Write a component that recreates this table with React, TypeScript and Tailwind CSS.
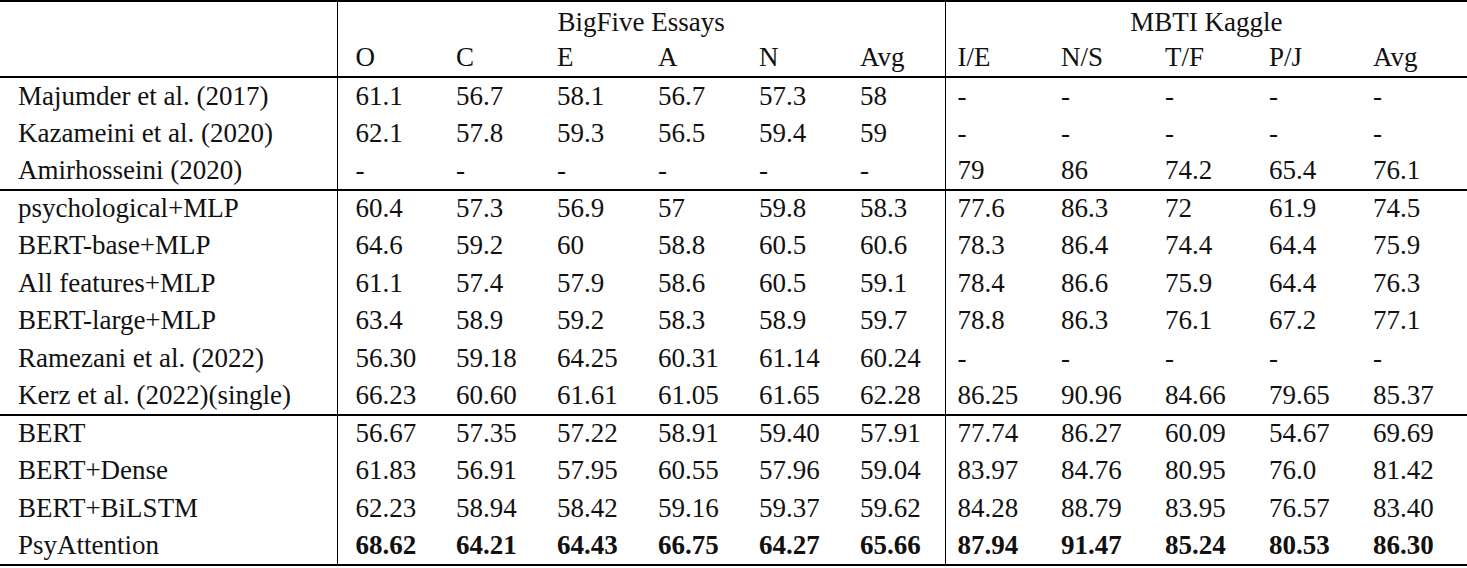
import React from "react";

type Row = { name: string; big: string[]; mbti: string[]; bold?: boolean };

const groups: Row[][] = [
  [
    { name: "Majumder et al. (2017)", big: ["61.1", "56.7", "58.1", "56.7", "57.3", "58"], mbti: ["-", "-", "-", "-", "-"] },
    { name: "Kazameini et al. (2020)", big: ["62.1", "57.8", "59.3", "56.5", "59.4", "59"], mbti: ["-", "-", "-", "-", "-"] },
    { name: "Amirhosseini (2020)", big: ["-", "-", "-", "-", "-", "-"], mbti: ["79", "86", "74.2", "65.4", "76.1"] },
  ],
  [
    { name: "psychological+MLP", big: ["60.4", "57.3", "56.9", "57", "59.8", "58.3"], mbti: ["77.6", "86.3", "72", "61.9", "74.5"] },
    { name: "BERT-base+MLP", big: ["64.6", "59.2", "60", "58.8", "60.5", "60.6"], mbti: ["78.3", "86.4", "74.4", "64.4", "75.9"] },
    { name: "All features+MLP", big: ["61.1", "57.4", "57.9", "58.6", "60.5", "59.1"], mbti: ["78.4", "86.6", "75.9", "64.4", "76.3"] },
    { name: "BERT-large+MLP", big: ["63.4", "58.9", "59.2", "58.3", "58.9", "59.7"], mbti: ["78.8", "86.3", "76.1", "67.2", "77.1"] },
    { name: "Ramezani et al. (2022)", big: ["56.30", "59.18", "64.25", "60.31", "61.14", "60.24"], mbti: ["-", "-", "-", "-", "-"] },
    { name: "Kerz et al. (2022)(single)", big: ["66.23", "60.60", "61.61", "61.05", "61.65", "62.28"], mbti: ["86.25", "90.96", "84.66", "79.65", "85.37"] },
  ],
  [
    { name: "BERT", big: ["56.67", "57.35", "57.22", "58.91", "59.40", "57.91"], mbti: ["77.74", "86.27", "60.09", "54.67", "69.69"] },
    { name: "BERT+Dense", big: ["61.83", "56.91", "57.95", "60.55", "57.96", "59.04"], mbti: ["83.97", "84.76", "80.95", "76.0", "81.42"] },
    { name: "BERT+BiLSTM", big: ["62.23", "58.94", "58.42", "59.16", "59.37", "59.62"], mbti: ["84.28", "88.79", "83.95", "76.57", "83.40"] },
    { name: "PsyAttention", big: ["68.62", "64.21", "64.43", "66.75", "64.27", "65.66"], mbti: ["87.94", "91.47", "85.24", "80.53", "86.30"], bold: true },
  ],
];

const bigCols = ["O", "C", "E", "A", "N", "Avg"];
const mbtiCols = ["I/E", "N/S", "T/F", "P/J", "Avg"];

export default function App(): React.ReactElement {
  return (
    <div className="w-[1467px] h-[568px] bg-white text-[#111] font-['Liberation_Serif','Times_New_Roman',serif] text-[27px] leading-none">
      <table className="table-fixed border-collapse w-[1467px]">
        <colgroup>
          <col className="w-[337px]" />
          {bigCols.map((c, i) => (
            <col key={"b" + c} className={i === 5 ? "w-[103px]" : "w-[101px]"} />
          ))}
          {mbtiCols.map((c, i) => (
            <col key={"m" + c} className={i === 4 ? "w-[106px]" : "w-[104px]"} />
          ))}
        </colgroup>
        <thead>
          <tr className="h-[38px] border-t-2 border-black">
            <th rowSpan={2} className="border-r border-black" />
            <th colSpan={6} className="font-normal text-center border-r border-black pt-[4px]">
              BigFive Essays
            </th>
            <th colSpan={5} className="font-normal text-center pt-[4px]">
              MBTI Kaggle
            </th>
          </tr>
          <tr className="h-[38px] border-b-2 border-black">
            {bigCols.map((c, i) => (
              <th key={"hb" + c} className={"font-normal text-left pl-[18px] " + (i === 5 ? "border-r border-black" : "")}>
                {c}
              </th>
            ))}
            {mbtiCols.map((c) => (
              <th key={"hm" + c} className="font-normal text-left pl-[12px]">
                {c}
              </th>
            ))}
          </tr>
        </thead>
        {groups.map((rows, gi) => (
          <tbody key={gi} className="border-b-2 border-black">
            {rows.map((r) => (
              <tr key={r.name} className="h-[37.5px]">
                <td className="pl-[18px] border-r border-black whitespace-nowrap">{r.name}</td>
                {r.big.map((v, i) => (
                  <td key={"b" + i} className={"pl-[18px] " + (r.bold ? "font-bold " : "") + (i === 5 ? "border-r border-black" : "")}>
                    {v}
                  </td>
                ))}
                {r.mbti.map((v, i) => (
                  <td key={"m" + i} className={"pl-[12px] " + (r.bold ? "font-bold" : "")}>
                    {v}
                  </td>
                ))}
              </tr>
            ))}
          </tbody>
        ))}
      </table>
    </div>
  );
}
